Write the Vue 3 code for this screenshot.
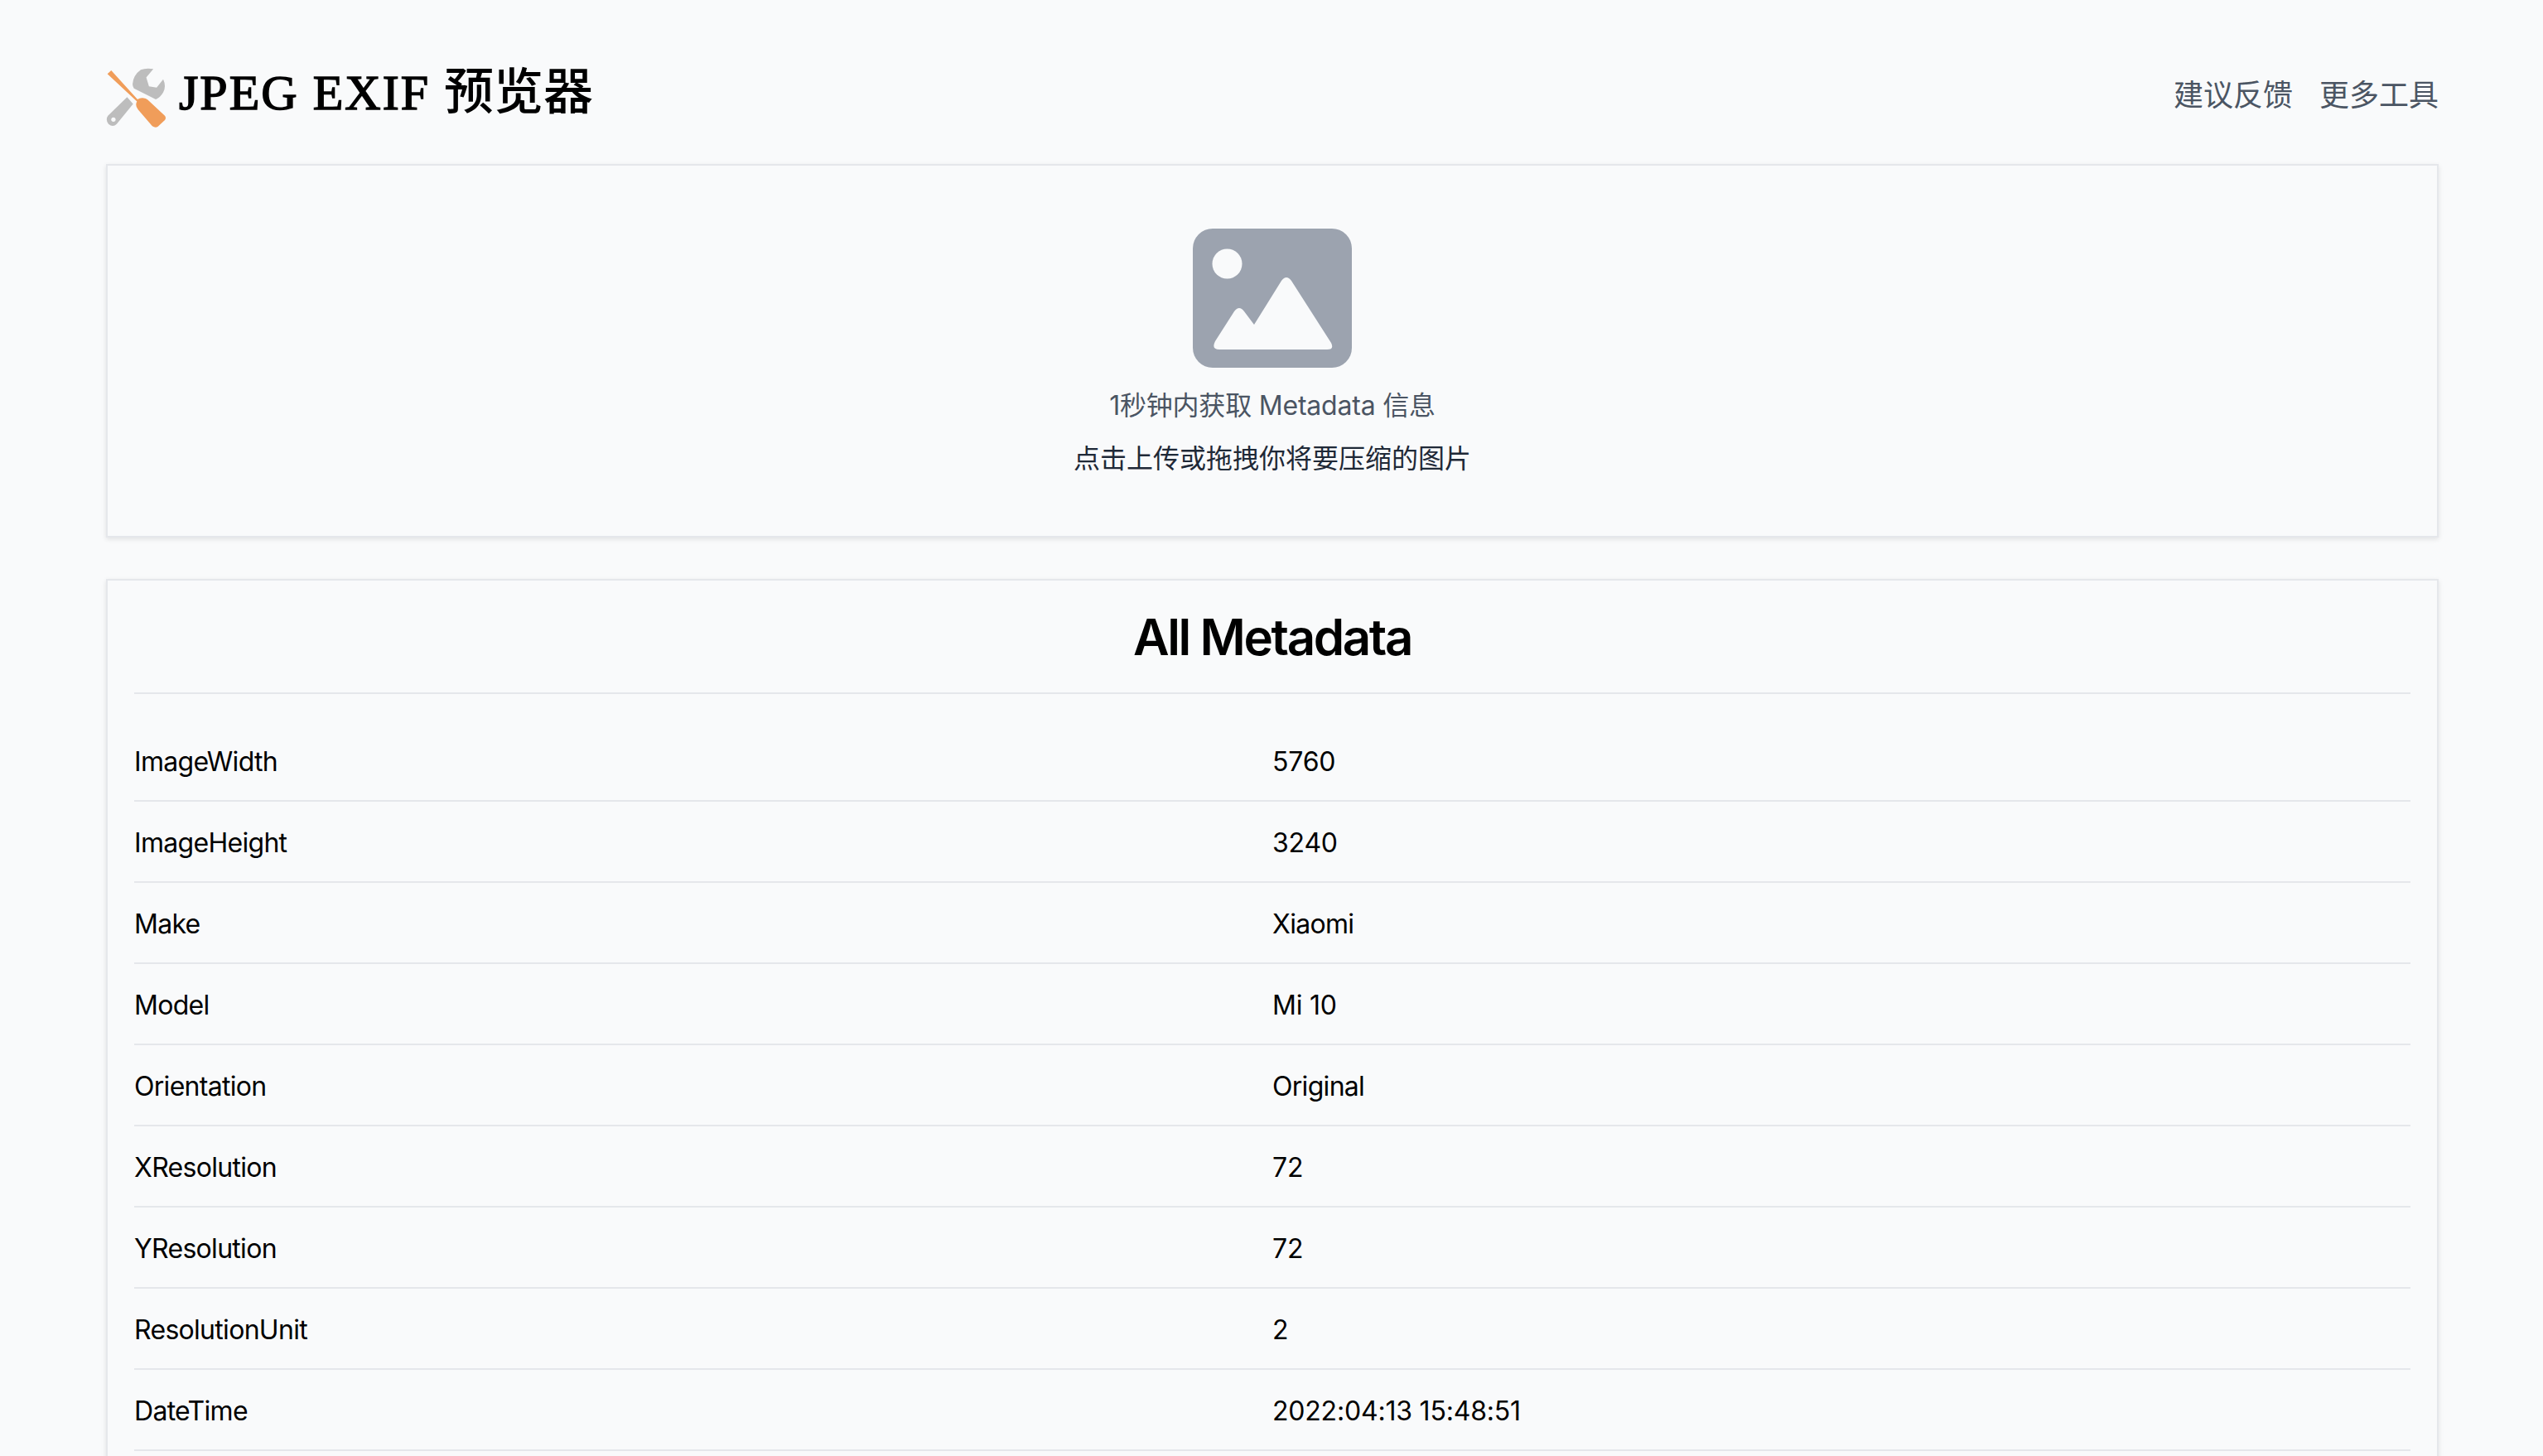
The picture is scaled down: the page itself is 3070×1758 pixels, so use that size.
<script setup>
const rows = [
  ['ImageWidth', '5760', true],
  ['ImageHeight', '3240', true],
  ['Make', 'Xiaomi', false],
  ['Model', 'Mi 10', true],
  ['Orientation', 'Original', false],
  ['XResolution', '72', true],
  ['YResolution', '72', true],
  ['ResolutionUnit', '2', true],
  ['DateTime', '2022:04:13 15:48:51', true],
]
</script>

<template>
  <div class="page">
    <header class="header">
      <div class="brand">
        <svg class="logo" viewBox="24 33 216 218" aria-hidden="true">
          <path fill="#bdbdbd" d="M120 92Q122 60 150 40Q170 32 196 37L170 68L180 100L208 105L232 75Q244 100 232 122Q222 140 205 148L125 108Q120 100 120 92Z" />
          <path fill="#bdbdbd" fill-rule="evenodd" d="M100 140L122 165L62 238Q48 252 32 238Q20 222 30 208ZM50 214a8 8 0 1 0 .01 0Z" />
          <path fill="#f09d5a" d="M28 55L42 42L138 148Q150 140 168 145Q176 148 182 156L238 208Q244 216 238 224L212 248Q203 253 192 246L140 185Q128 170 136 156Z" />
        </svg>
        <h1 class="title">JPEG EXIF <span class="title-cjk">预览器</span></h1>
      </div>
      <nav class="nav">
        <a>建议反馈</a>
        <a>更多工具</a>
      </nav>
    </header>

    <section class="card upload">
      <svg class="photo" viewBox="0 0 192 168" aria-hidden="true">
        <rect width="192" height="168" rx="24" fill="#9ca3af" />
        <circle cx="41.5" cy="42.5" r="18" fill="#f9fafb" />
        <path fill="#f9fafb" d="M32 146H162Q171 146 167 138L119 63Q113 55 107 63L74 116L62 100Q56 92 50 100L27 136Q22 146 32 146Z" />
      </svg>
      <p class="lead">1秒钟内获取 Metadata 信息</p>
      <p class="hint">点击上传或拖拽你将要压缩的图片</p>
    </section>

    <section class="card meta">
      <h2 class="meta-title">All Metadata</h2>
      <div class="table">
        <div v-for="row in rows" :key="row[0]" class="row">
          <span>{{ row[0] }}</span>
          <span :class="{ num: row[2] }">{{ row[1] }}</span>
        </div>
      </div>
    </section>
  </div>
</template>

<style>
html, body {
  margin: 0;
  height: 100%;
  overflow: hidden;
  background: #f9fafb;
}
</style>

<style scoped>
.page {
  box-sizing: border-box;
  width: 2816px;
  margin: 0 126px 0 128px;
  padding-top: 82px;
  font-family: Inter, "Noto Sans CJK SC", sans-serif;
  font-size: 32px;
  line-height: 48px;
  color: #000;
}
.header {
  display: flex;
  justify-content: space-between;
  align-items: center;
  height: 72px;
  margin-bottom: 44px;
}
.brand {
  display: flex;
  align-items: center;
  gap: 16px;
}
.logo {
  width: 72px;
  height: 72px;
  flex: none;
}
.title {
  margin: -12px 0 0;
  font-family: "Liberation Serif", "Noto Sans CJK SC", serif;
  font-size: 60px;
  line-height: 72px;
  font-weight: 400;
  letter-spacing: 2px;
  -webkit-text-stroke: 1.5px #000;
}
.title-cjk {
  font-weight: 500;
  letter-spacing: 0;
  -webkit-text-stroke: 0;
}
.nav {
  display: flex;
  gap: 32px;
  margin-top: -12px;
  font-family: "Noto Sans CJK SC", sans-serif;
  font-size: 36px;
  line-height: 48px;
  color: #4b5563;
}
.card {
  box-sizing: border-box;
  border: 2px solid #e5e7eb;
  box-shadow: 0 2px 6px rgba(0, 0, 0, 0.1);
  background: #f9fafb;
}
.upload {
  display: flex;
  flex-direction: column;
  align-items: center;
  height: 451px;
  padding-top: 76px;
  margin-bottom: 50px;
}
.photo {
  width: 192px;
  height: 168px;
}
.lead {
  margin: 22px 0 0;
  color: #4b5563;
  letter-spacing: -0.2px;
}
.hint {
  margin: 16px 0 0;
  color: #1f2937;
}
.meta {
  padding: 0 32px 120px;
}
.meta-title {
  margin: 0;
  height: 137px;
  box-sizing: border-box;
  border-bottom: 2px solid #e5e7eb;
  text-align: center;
  font-size: 60px;
  line-height: 72px;
  font-weight: 600;
  letter-spacing: -2.4px;
  padding-top: 32px;
}
.table {
  padding-top: 32px;
}
.row {
  display: grid;
  grid-template-columns: 1fr 1fr;
  padding: 26px 0 22px;
  border-bottom: 2px solid #e5e7eb;
  letter-spacing: -0.7px;
}
.num {
  letter-spacing: -0.2px;
}
</style>
